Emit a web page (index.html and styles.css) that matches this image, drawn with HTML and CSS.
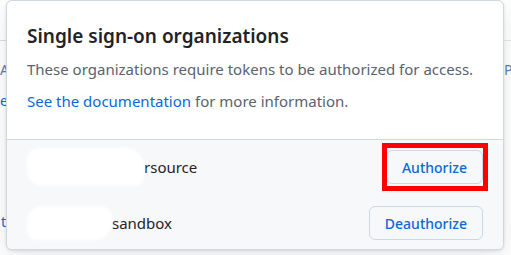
FILE: index.html
```html
<!DOCTYPE html>
<html lang="en">
  <head>
    <meta charset="UTF-8" />
    <meta name="viewport" content="width=device-width, initial-scale=1.0" />
    <title>Single sign-on organizations</title>
    <link rel="stylesheet" href="styles.css">
  </head>
  <body>
    <div class="page">
      <div class="side side-left">
        <div class="side-head"></div>
        <p class="frag frag-a">A</p>
        <p class="frag frag-e">e</p>
        <p class="frag frag-t">t</p>
      </div>

      <div class="dialog">
        <div class="dialog-header">
          <h2>Single sign-on organizations</h2>
          <p class="desc">These organizations require tokens to be authorized for access.</p>
          <p class="desc"><a href="#">See the documentation</a> for more information.</p>
        </div>
        <div class="dialog-body">
          <div class="org-row">
            <span class="org-name"><span class="redact redact-1"></span>rsource</span>
            <button class="btn btn-marked">Authorize</button>
          </div>
          <div class="org-row">
            <span class="org-name"><span class="redact redact-2"></span>sandbox</span>
            <button class="btn">Deauthorize</button>
          </div>
        </div>
      </div>

      <div class="side side-right">
        <div class="side-head"></div>
        <p class="frag frag-p">P</p>
      </div>
    </div>
  </body>
</html>
```

FILE: styles.css
```css
* {
  margin: 0;
  padding: 0;
  box-sizing: border-box;
}

body {
  background: #ffffff;
  font-family: "Noto Sans", "Open Sans", sans-serif;
  color: #1f2328;
  overflow: hidden;
}

.page {
  display: grid;
  grid-template-columns: 6px 498px 7px;
  height: 255px;
}

.side {
  overflow: hidden;
  font-size: 14px;
  line-height: 20px;
}

.side-head {
  height: 41px;
  border-bottom: 1px solid #d8dee4;
}

.side-left {
  text-align: right;
}

.frag {
  color: #0969da;
  white-space: nowrap;
}

.frag-a {
  margin-top: 19px;
  color: #5a7db0;
}

.frag-e {
  margin-top: 11px;
}

.frag-t {
  margin-top: 101px;
}

.frag-p {
  margin-top: 19px;
  color: #5a7db0;
}

.dialog {
  height: 250px;
  background: #ffffff;
  border: 1px solid #d0d7de;
  border-radius: 6px;
  box-shadow: 0 1px 3px rgba(31, 35, 40, 0.12), 0 8px 24px rgba(66, 74, 83, 0.12);
  overflow: hidden;
  display: flex;
  flex-direction: column;
}

.dialog-header {
  padding: 21px 20px 0;
  height: 139px;
  border-bottom: 1px solid #d0d7de;
}

.dialog-header h2 {
  font-size: 19px;
  font-weight: 600;
  line-height: 28px;
  margin-bottom: 3px;
}

.desc {
  font-size: 15px;
  line-height: 32px;
  color: #59636e;
}

.desc a {
  color: #0969da;
  text-decoration: none;
}

.dialog-body {
  flex: 1;
  background: #f6f8fa;
  padding: 10px 20px 8px;
  display: flex;
  flex-direction: column;
  gap: 22px;
}

.org-row {
  display: flex;
  align-items: center;
  justify-content: space-between;
  height: 34px;
}

.org-name {
  display: flex;
  align-items: center;
  font-size: 15px;
  color: #1f2328;
}

.redact {
  display: inline-block;
  background: #ffffff;
  border-radius: 12px 18px 10px 16px;
  filter: blur(1.5px);
}

.redact-1 {
  width: 117px;
  height: 38px;
}

.redact-2 {
  width: 85px;
  height: 34px;
  border-radius: 16px 12px 18px 10px;
}

.btn {
  position: relative;
  height: 34px;
  padding: 0 15px;
  border: 1px solid #d0d7de;
  border-radius: 6px;
  background: #f6f8fa;
  color: #0969da;
  font-family: inherit;
  font-size: 14px;
  font-weight: 500;
  cursor: pointer;
}

.btn-marked::after {
  content: "";
  position: absolute;
  top: -8px;
  bottom: -8px;
  left: -5px;
  right: -6px;
  border: 5px solid #ff0000;
}
```
